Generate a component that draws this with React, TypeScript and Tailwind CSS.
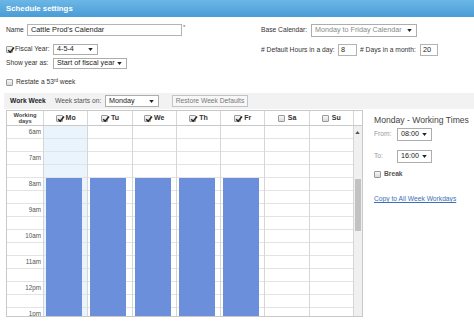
import React from 'react';

const font = { fontFamily: '"Liberation Sans", Arial, sans-serif' };

function Check({ checked = false }: { checked?: boolean }) {
    return (
        <span className="relative inline-flex h-[7px] w-[7px] shrink-0 items-center justify-center rounded-[1px] border border-[#9a9a9a] bg-gradient-to-b from-[#f7f7f7] to-[#d9d9d9]">
            {checked && (
                <svg viewBox="0 0 10 10" className="absolute -top-[1px] left-0 h-[8px] w-[8px]">
                    <path d="M1.5 5.2 L4 7.8 L8.8 1.8" fill="none" stroke="#222" strokeWidth="1.8" />
                </svg>
            )}
        </span>
    );
}

function Caret() {
    return (
        <svg viewBox="0 0 6 4" className="h-[3px] w-[5px] shrink-0">
            <path d="M0 0 H6 L3 4 Z" fill="#222" />
        </svg>
    );
}

function Select({ value, className, muted = false }: { value: string; className: string; muted?: boolean }) {
    return (
        <div
            className={`flex items-center justify-between border border-[#adadad] bg-white pl-[3px] pr-[4px] text-[7.2px] ${muted ? 'text-[#8a8a8a]' : 'text-[#222]'} ${className}`}
        >
            <span className="whitespace-nowrap">{value}</span>
            <Caret />
        </div>
    );
}

const days = [
    { name: 'Mo', on: true },
    { name: 'Tu', on: true },
    { name: 'We', on: true },
    { name: 'Th', on: true },
    { name: 'Fr', on: true },
    { name: 'Sa', on: false },
    { name: 'Su', on: false },
];

const hours = ['6am', '7am', '8am', '9am', '10am', '11am', '12pm', '1pm'];
const rows = Array.from({ length: 16 }, (_, i) => i);

export default function App() {
    return (
        <div className="h-[325px] w-[474px] overflow-hidden bg-white text-[6.7px] text-[#333]" style={font}>
            {/* title bar */}
            <div className="flex h-[17px] items-center bg-gradient-to-b from-[#6bb6e6] to-[#4a9cd6] pl-[6px] text-[7.8px] font-bold text-white">
                Schedule settings
            </div>

            {/* settings form */}
            <div className="flex px-[6px] pt-[7px]">
                <div className="flex w-[255px] flex-col">
                    <div className="flex h-[12px] items-center">
                        <span className="w-[21px]">Name</span>
                        <div className="flex h-[12px] w-[155px] items-center border border-[#b3b3b3] pl-[3px] text-[7.3px] text-[#222]">
                            Cattle Prod's Calendar
                        </div>
                        <span className="-mt-[5px] ml-[1px] text-[6px] text-[#666]">*</span>
                    </div>
                    <div className="mt-[7px] flex h-[12px] items-center">
                        <Check checked />
                        <span className="ml-[2px] w-[38px]">Fiscal Year:</span>
                        <Select value="4-5-4" className="h-[11px] w-[45px]" />
                    </div>
                    <div className="mt-[3px] flex h-[11px] items-center">
                        <span className="w-[47px]">Show year as:</span>
                        <Select value="Start of fiscal year" className="h-[11px] w-[74px]" />
                    </div>
                    <div className="mt-[8px] flex h-[11px] items-center">
                        <Check />
                        <span className="ml-[3px]">
                            Restate a 53<sup className="text-[4.5px]">rd</sup> week
                        </span>
                    </div>
                </div>
                <div className="flex flex-col">
                    <div className="flex h-[13px] items-center">
                        <span className="w-[50px]">Base Calendar:</span>
                        <Select value="Monday to Friday Calendar" className="h-[13px] w-[106px]" muted />
                    </div>
                    <div className="mt-[7px] flex h-[12px] items-center">
                        <span className="w-[77px]">&#35; Default Hours in a day:</span>
                        <div className="flex h-[12px] w-[19px] items-center border border-[#b3b3b3] pl-[2px] text-[7.3px] text-[#222]">8</div>
                        <span className="ml-[3px] w-[60px]">&#35; Days in a month:</span>
                        <div className="flex h-[12px] w-[18px] items-center border border-[#b3b3b3] pl-[2px] text-[7.3px] text-[#222]">20</div>
                    </div>
                </div>
            </div>

            {/* work week toolbar */}
            <div className="ml-[4px] mt-[5px] flex h-[16px] items-center bg-[#f2f2f2] pl-[6px]">
                <span className="w-[45px] font-bold text-[#222]">Work Week</span>
                <span className="w-[50px] text-[#555]">Week starts on:</span>
                <Select value="Monday" className="h-[12px] w-[54px]" />
                <div className="ml-[13px] flex h-[12px] w-[76px] items-center justify-center border border-[#c4c4c4] bg-[#f7f7f7] text-[#777]">
                    Restore Week Defaults
                </div>
            </div>

            <div className="mt-[1px] flex">
                {/* week grid */}
                <div className="ml-[6px] w-[357px] border border-[#c9c9c9]">
                    <div className="grid h-[15px] grid-cols-[36px_repeat(7,minmax(0,1fr))_9px] border-b border-[#c9c9c9]">
                        <div className="flex flex-col items-center justify-center text-[5.8px] font-bold leading-[6px] text-[#444]">
                            <span>Working</span>
                            <span>days</span>
                        </div>
                        {days.map((d) => (
                            <div key={d.name} className="flex items-center justify-center gap-[3px] border-l border-[#d6d6d6] text-[7px] font-bold text-[#333]">
                                <Check checked={d.on} />
                                {d.name}
                            </div>
                        ))}
                        <div className="border-l border-[#d6d6d6]" />
                    </div>
                    <div className="grid h-[190px] grid-cols-[36px_repeat(7,minmax(0,1fr))_9px] overflow-hidden">
                        <div>
                            {rows.map((r) => (
                                <div key={r} className="flex h-[13px] items-center justify-end border-b border-[#e3e3e3] pr-[2px] text-[6.3px] text-[#555]">
                                    {r % 2 === 0 ? hours[r / 2] : ''}
                                </div>
                            ))}
                        </div>
                        {days.map((d, i) => (
                            <div key={d.name} className={`relative border-l border-[#d6d6d6] ${i === 0 ? 'bg-[#eaf4fd]' : ''}`}>
                                {rows.map((r) => (
                                    <div key={r} className="h-[13px] border-b border-[#e3e3e3]" />
                                ))}
                                {d.on && <div className="absolute bottom-0 left-[2px] top-[52px] w-[36px] bg-[#6b8fdb]" />}
                            </div>
                        ))}
                        <div className="relative flex flex-col items-center justify-between border-l border-[#d6d6d6] bg-[#f0f0f0] py-[5px]">
                            <svg viewBox="0 0 6 4" className="h-[3px] w-[5px]">
                                <path d="M0 4 H6 L3 0 Z" fill="#555" />
                            </svg>
                            <div className="absolute left-[1px] right-[1px] top-[53px] h-[52px] bg-[#c2c2c2]" />
                            <svg viewBox="0 0 6 4" className="h-[3px] w-[5px]">
                                <path d="M0 0 H6 L3 4 Z" fill="#555" />
                            </svg>
                        </div>
                    </div>
                </div>

                {/* day working times */}
                <div className="ml-[11px] flex flex-col">
                    <div className="mt-[5px] text-[8.6px] leading-[10px] text-[#444]">Monday - Working Times</div>
                    <div className="mt-[3px] flex h-[13px] items-center">
                        <span className="w-[23px] text-[#999]">From:</span>
                        <Select value="08:00" className="h-[13px] w-[35px]" />
                    </div>
                    <div className="mt-[9px] flex h-[13px] items-center">
                        <span className="w-[23px] text-[#999]">To:</span>
                        <Select value="16:00" className="h-[13px] w-[35px]" />
                    </div>
                    <div className="mt-[7px] flex h-[8px] items-center">
                        <Check />
                        <span className="ml-[3px] font-bold text-[#555]">Break</span>
                    </div>
                    <div className="mt-[16px] h-[10px] leading-[10px] text-[#3b6fb6] underline">Copy to All Week Workdays</div>
                </div>
            </div>
        </div>
    );
}
